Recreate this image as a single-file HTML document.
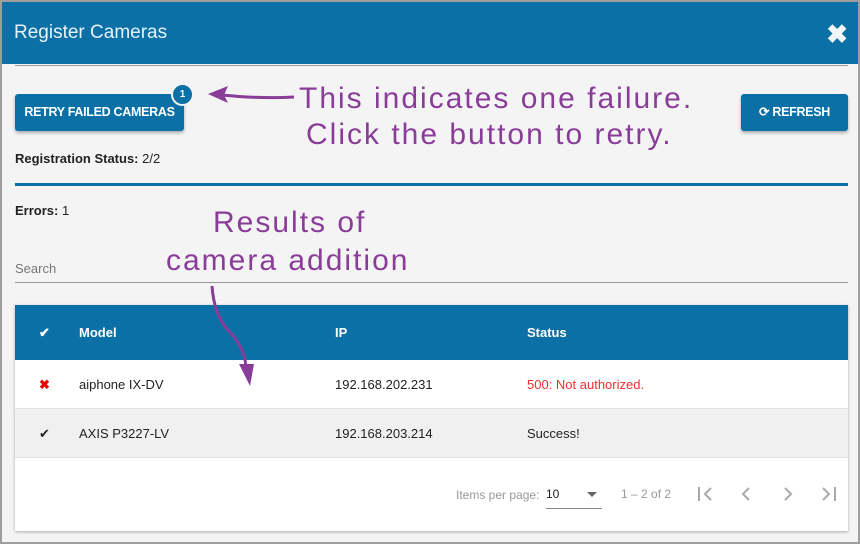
<!DOCTYPE html>
<html><head><style>
*{box-sizing:border-box;margin:0;padding:0}
body{width:860px;height:544px;overflow:hidden;background:#9e9e9e;font-family:"Liberation Sans",Arial,sans-serif;position:relative}
#w{position:absolute;left:2px;top:2px;width:856px;height:540px;background:#f4f4f4;overflow:hidden}
.hdr{position:absolute;left:0;top:0;width:856px;height:62px;background:#0a70a6;color:#e8f2f8;font-size:19px;padding:20px 0 0 12px}
.x{position:absolute;right:10px;top:22px;color:#f0f5f8;font-size:26px;font-weight:bold;line-height:20px}
.a{position:absolute}
.btn{background:#0a70a6;color:#fff;font-weight:bold;font-size:12.5px;letter-spacing:-.3px;border-radius:3px;box-shadow:0 2px 3px rgba(0,0,0,.3);text-align:center}
.pur{color:#8a3d98;font-size:30px;letter-spacing:2px}
.row{position:absolute;left:13px;width:833px;font-size:13px;color:#222}
.pg{color:#999;font-size:12px}
</style></head><body><div id="w">
<div class="hdr">Register Cameras<span class="x">✖</span></div>
<div class="a" style="left:13px;top:63px;width:833px;height:1px;background:#999"></div>
<div class="a btn" style="left:13px;top:92px;width:169px;height:37px;line-height:37px">RETRY FAILED CAMERAS</div>
<div class="a" style="left:169px;top:81px;width:23px;height:23px;border-radius:50%;background:#0a70a6;border:2px solid #f4f4f4;color:#fff;font-size:10px;font-weight:bold;text-align:center;line-height:19px">1</div>
<div class="a btn" style="left:739px;top:92px;width:107px;height:37px;line-height:37px">⟳ REFRESH</div>
<div class="a pur" style="left:297px;top:80px">This indicates one failure.</div>
<div class="a pur" style="left:304px;top:116px">Click the button to retry.</div>
<svg class="a" style="left:200px;top:80px" width="100" height="30"><path d="M92 15 Q60 17 20 13" stroke="#8a3d98" stroke-width="3" fill="none"/><path d="M6 12 L26 4 L22 13 L26 21 Z" fill="#8a3d98"/></svg>
<div class="a" style="left:13px;top:149px;font-size:13px;color:#222"><b>Registration Status:</b> 2/2</div>
<div class="a" style="left:13px;top:181px;width:833px;height:3px;background:#0a70a6"></div>
<div class="a" style="left:13px;top:201px;font-size:13px;color:#222"><b>Errors:</b> 1</div>
<div class="a pur" style="left:211px;top:204px">Results of</div>
<div class="a pur" style="left:164px;top:242px">camera addition</div>
<div class="a" style="left:13px;top:259px;font-size:13px;color:#777">Search</div>
<div class="a" style="left:13px;top:280px;width:833px;height:1px;background:#999"></div>
<div class="a" style="left:13px;top:303px;width:833px;height:226px;background:#fff;box-shadow:0 1px 3px rgba(0,0,0,.3)"></div>
<div class="row" style="top:303px;height:55px;background:#0a70a6;color:#fff;font-weight:bold;line-height:55px">
<span class="a" style="left:24px">✔</span><span class="a" style="left:64px">Model</span><span class="a" style="left:320px">IP</span><span class="a" style="left:512px">Status</span></div>
<div class="row" style="top:358px;height:49px;background:#fff;line-height:49px;border-bottom:1px solid #e3e3e3">
<span class="a" style="left:24px;color:#e00;font-weight:bold">✖</span><span class="a" style="left:64px">aiphone IX-DV</span><span class="a" style="left:320px">192.168.202.231</span><span class="a" style="left:512px;color:#f03030">500: Not authorized.</span></div>
<div class="row" style="top:407px;height:49px;background:#f0f0f0;line-height:49px;border-bottom:1px solid #e3e3e3">
<span class="a" style="left:24px">✔</span><span class="a" style="left:64px">AXIS P3227-LV</span><span class="a" style="left:320px">192.168.203.214</span><span class="a" style="left:512px">Success!</span></div>
<svg class="a" style="left:200px;top:282px" width="70" height="110"><path d="M10 2 Q12 30 25 45 Q45 65 44 88" stroke="#8a3d98" stroke-width="3" fill="none"/><path d="M37 80 L52 80 L48 102 Z" fill="#8a3d98"/></svg>
<div class="a pg" style="left:454px;top:486px">Items per page:</div>
<div class="a" style="left:544px;top:485px;font-size:12px;color:#222">10</div>
<div class="a" style="left:585px;top:490px;border:5px solid transparent;border-top-color:#666;border-bottom:0"></div>
<div class="a" style="left:544px;top:506px;width:56px;height:1px;background:#888"></div>
<div class="a pg" style="left:619px;top:485px">1 – 2 of 2</div>
<svg class="a" style="left:690px;top:482px" width="150" height="20" fill="none" stroke="#aaa" stroke-width="2"><path d="M7 3v14M19 4l-6 6 6 6"/><path d="M57 4l-6 6 6 6"/><path d="M93 4l6 6-6 6"/><path d="M131 4l6 6-6 6M143 3v14"/></svg>
</div></body></html>
